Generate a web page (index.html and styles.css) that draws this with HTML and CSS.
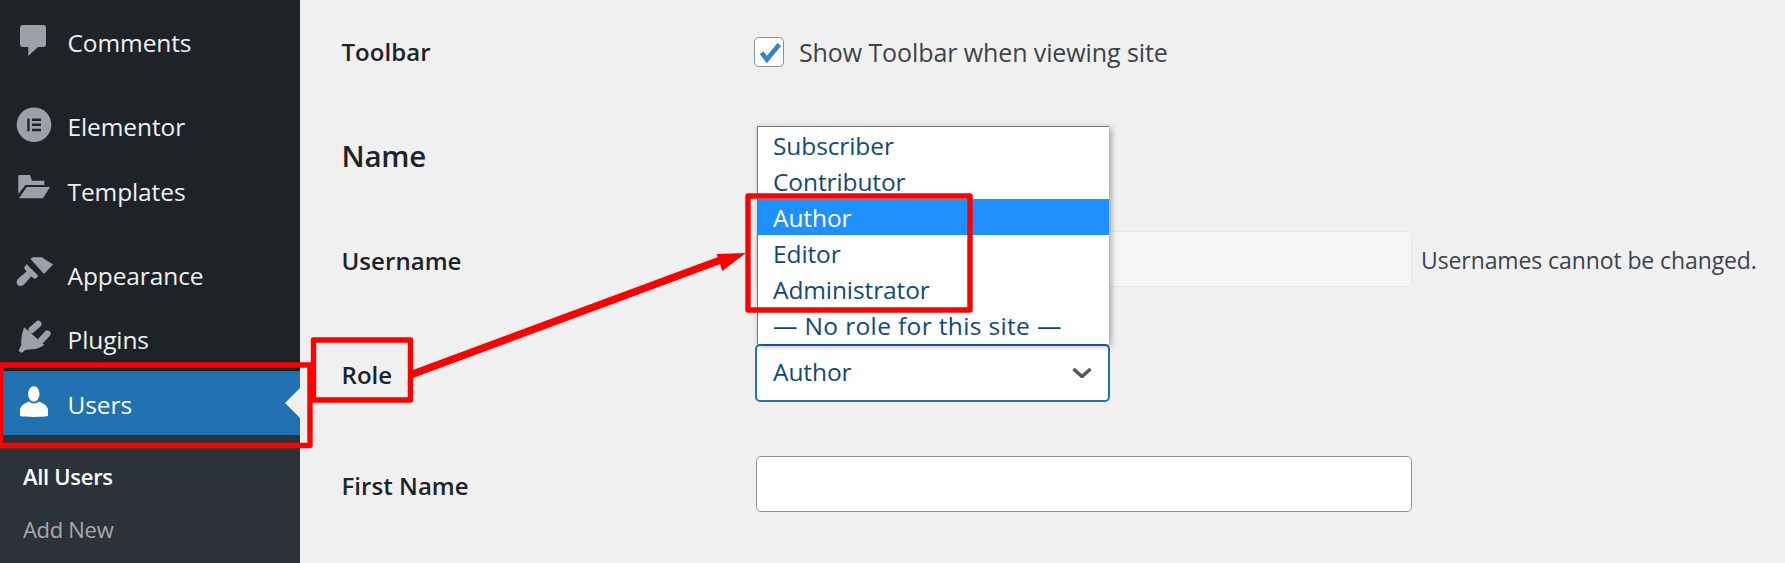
FILE: index.html
```html
<!DOCTYPE html>
<html lang="en">
<head>
<meta charset="utf-8">
<title>Edit User</title>
<link rel="stylesheet" href="styles.css">
</head>
<body>
<div class="page">
  <aside class="sidebar">
    <nav class="menu">
      <a class="item item-up"><svg class="icon" viewBox="0 0 68 64"><path class="ic" d="M23 14h20a3 3 0 0 1 3 3v16a3 3 0 0 1-3 3H38L28.300 45V36H23a3 3 0 0 1-3-3V17a3 3 0 0 1 3-3z"/></svg><span>Comments</span></a>
      <a class="item item-up item-gap"><svg class="icon" viewBox="0 0 68 64"><circle class="ic" cx="34" cy="29.700" r="17.300"/><path class="cut" d="M27.300 23.500h2.300v12.700h-2.300zM32 23.500h9v2.500h-9zM32 28.600h9v2.400h-9zM32 33.700h9v2.500h-9z"/></svg><span>Elementor</span></a>
      <a class="item"><svg class="icon" viewBox="0 0 68 64"><path class="ic" d="M18.300 17a1 1 0 0 1 1-1H30l2 5.700h12.300v4.300H25.500L18.300 35zM26.700 28H50L43 39.300H19z"/></svg><span>Templates</span></a>
      <a class="item item-gap"><svg class="icon" viewBox="0 0 68 64"><path class="ic" d="M30.500 16L33 14.300H41.700L53 21.500 44 31zM26.500 21L38.500 33 35 36 31 33.500 24.500 41C22.500 43.500 18 43.500 17 41 16 38.500 17 36.500 19 35L26.500 28.500 24 25z"/></svg><span>Appearance</span></a>
      <a class="item"><svg class="icon" viewBox="0 0 68 64"><path class="ic" d="M24 20.300L44.300 37.700C41 40.500 36 42.500 31.500 42.300L25 43 23 45C21.500 46.500 18.500 45 19 42.800L20 40.500 21.300 38.500C20.800 34 21.500 28 24 20.300z"/><path class="prong" d="M31.700 22.700L38.300 17M41.700 32.700L47.300 26.700"/></svg><span>Plugins</span></a>
      <a class="item item-active"><svg class="icon icon-user" viewBox="0 0 68 64"><ellipse cx="33.800" cy="23" rx="5.700" ry="7.800"/><path d="M20 45v-6c0-4 5-7 9-8.500 3 2.500 7 2.500 10 0 4 1.500 9 4.500 9 8.500v6c-8 1.200-20 1.200-28 0z"/></svg><span>Users</span></a>
    </nav>
    <div class="submenu">
      <a class="sub sub-current">All Users</a>
      <a class="sub">Add New</a>
    </div>
  </aside>

  <main class="content">
    <div class="row row-toolbar">
      <div class="label">Toolbar</div>
      <label class="check-field">
        <span class="checkbox"><svg class="tick" viewBox="0 0 30 30"><path d="M7 15.700l5.700 7.300L26 7"/></svg></span>
        <span>Show Toolbar when viewing site</span>
      </label>
    </div>
    <h2 class="heading">Name</h2>
    <div class="row row-username">
      <div class="label">Username</div>
      <div class="input input-disabled"></div>
      <span class="hint">Usernames cannot be changed.</span>
    </div>
    <div class="row row-role">
      <div class="label">Role</div>
      <div class="select">
        <span class="select-value">Author</span>
        <svg class="chevron" viewBox="0 0 20 10"><path d="M1.500 1L10 8.500 18.500 1"/></svg>
      </div>
    </div>
    <div class="row row-first">
      <div class="label">First Name</div>
      <div class="input"></div>
    </div>

    <ul class="dropdown">
      <li>Subscriber</li>
      <li>Contributor</li>
      <li class="selected">Author</li>
      <li>Editor</li>
      <li>Administrator</li>
      <li class="no-role">— No role for this site —</li>
    </ul>
  </main>

  <svg class="marks" viewBox="0 0 1785 563" aria-hidden="true">
    <rect class="mark" x="0.500" y="365" width="309.500" height="80.500"/>
    <rect class="mark" x="313.500" y="340" width="97" height="60"/>
    <rect class="mark" x="748" y="196" width="222" height="114"/>
    <path class="mark mark-line" d="M411 374.700L722 259.500"/>
    <path class="mark-head" d="M746 253L716.700 254L722.300 271z"/>
  </svg>
</div>
</body>
</html>
```
FILE: styles.css
```css
* { box-sizing: border-box; }

html, body {
  margin: 0;
  padding: 0;
  height: 563px;
  overflow: hidden;
}

body {
  background: #f0f0f1;
  color: #1d2327;
  font-family: "Open Sans", "Noto Sans", sans-serif;
}

.page {
  position: relative;
  display: flex;
  width: 1785px;
  height: 563px;
  overflow: hidden;
}

.sidebar {
  display: flex;
  flex-direction: column;
  flex: none;
  width: 300px;
  height: 563px;
  background: #1d2327;
}

.menu {
  display: flex;
  flex-direction: column;
  padding-top: 11px;
}

.item {
  position: relative;
  display: flex;
  align-items: center;
  height: 64px;
  color: #f0f0f1;
  font-size: 24.500px;
  letter-spacing: -0.100px;
}

.item span { margin-left: -0.500px; margin-top: 1px; }
.item-up span { margin-top: -1px; }
.item-active span { margin-top: 3px; }

.item-gap { margin-top: 20px; }

.icon {
  flex: none;
  width: 68px;
  height: 64px;
}

.ic { fill: #9ca1a8; }
.cut { fill: #1d2327; }
.prong { fill: none; stroke: #9ca1a8; stroke-width: 6.500; stroke-linecap: round; }

.icon-user { fill: #fff; }

.item-active {
  background: #2271b1;
  color: #fff;
}

.item-active::after {
  content: "";
  position: absolute;
  right: 0;
  top: 17px;
  border: 15px solid transparent;
  border-right-color: #f0f0f1;
}

.submenu {
  display: flex;
  flex-direction: column;
  flex: 1;
  padding: 24px 0 0 23px;
  background: #2c3338;
}

.sub {
  height: 53px;
  color: #a7aaad;
  font-size: 22px;
  line-height: 34px;
  letter-spacing: -0.300px;
}

.sub-current {
  color: #fff;
  font-weight: 600;
}

.content {
  position: relative;
  flex: 1;
  padding: 37px 0 0 42px;
}

.row {
  display: flex;
  align-items: center;
}

.label {
  flex: none;
  width: 413px;
  margin-top: 2px;
  margin-left: -0.500px;
  font-size: 24px;
  font-weight: 600;
  letter-spacing: 0.050px;
}

.row-toolbar { height: 30px; }
.row-toolbar .label { margin-top: -2px; }

.check-field {
  display: flex;
  align-items: center;
  gap: 15px;
  margin-left: -0.500px;
  color: #3c434a;
  font-size: 25px;
  letter-spacing: -0.100px;
}

.checkbox {
  flex: none;
  width: 30px;
  height: 30px;
  background: #fff;
  border: 1px solid #8c8f94;
  border-radius: 5px;
}

.tick {
  display: block;
  width: 28px;
  height: 28px;
  fill: none;
  stroke: #3582c4;
  stroke-width: 5;
}

.heading {
  height: 40px;
  margin: 69px 0 0 -0.500px;
  font-size: 29.500px;
  font-weight: 600;
  line-height: 40px;
  letter-spacing: -0.200px;
}

.row-username { margin-top: 55px; }
.row-role { margin-top: 57px; }
.row-first { margin-top: 54px; }

.select { margin-left: 0.500px; }

.input {
  width: 656px;
  height: 56px;
  margin-left: 1.500px;
  background: #fff;
  border: 1px solid #8c8f94;
  border-radius: 5px;
}

.input-disabled {
  background: #f6f6f7;
  border-color: #e6e6e7;
}

.hint {
  margin-top: 2px;
  margin-left: 9px;
  color: #3c434a;
  font-size: 23px;
  letter-spacing: -0.100px;
  white-space: nowrap;
}

.select {
  display: flex;
  align-items: center;
  justify-content: space-between;
  width: 355px;
  height: 58px;
  padding: 0 16px 0 16px;
  background: #fff;
  border: 2px solid #2271b1;
  border-radius: 5px;
  color: #124a75;
  font-size: 24.500px;
  letter-spacing: -0.100px;
}

.select-value { margin-top: -3px; }

.chevron {
  width: 20px;
  height: 10px;
  fill: none;
  stroke: #50575e;
  stroke-width: 3.500;
}

.dropdown {
  position: absolute;
  left: 457px;
  top: 126px;
  width: 352px;
  height: 218px;
  margin: 0;
  padding: 0;
  list-style: none;
  background: #fff;
  border-top: 1px solid #767676;
  border-left: 1px solid #767676;
  box-shadow: 2px 2px 6px rgba(0, 0, 0, .35);
  color: #124a75;
  font-size: 24.500px;
  letter-spacing: -0.100px;
}

.dropdown li {
  height: 36px;
  padding-left: 15px;
  line-height: 38px;
}

.dropdown .no-role { letter-spacing: .350px; }

.dropdown .selected {
  background: #1e90ff;
  color: #fff;
}

.marks {
  position: absolute;
  left: 0;
  top: 0;
  width: 1785px;
  height: 563px;
  pointer-events: none;
}

.mark {
  fill: none;
  stroke: #ff0000;
  stroke-width: 5.400;
  stroke-linejoin: round;
}

.mark-line { stroke-width: 7.500; }

.mark-head { fill: #ff0000; }
```
